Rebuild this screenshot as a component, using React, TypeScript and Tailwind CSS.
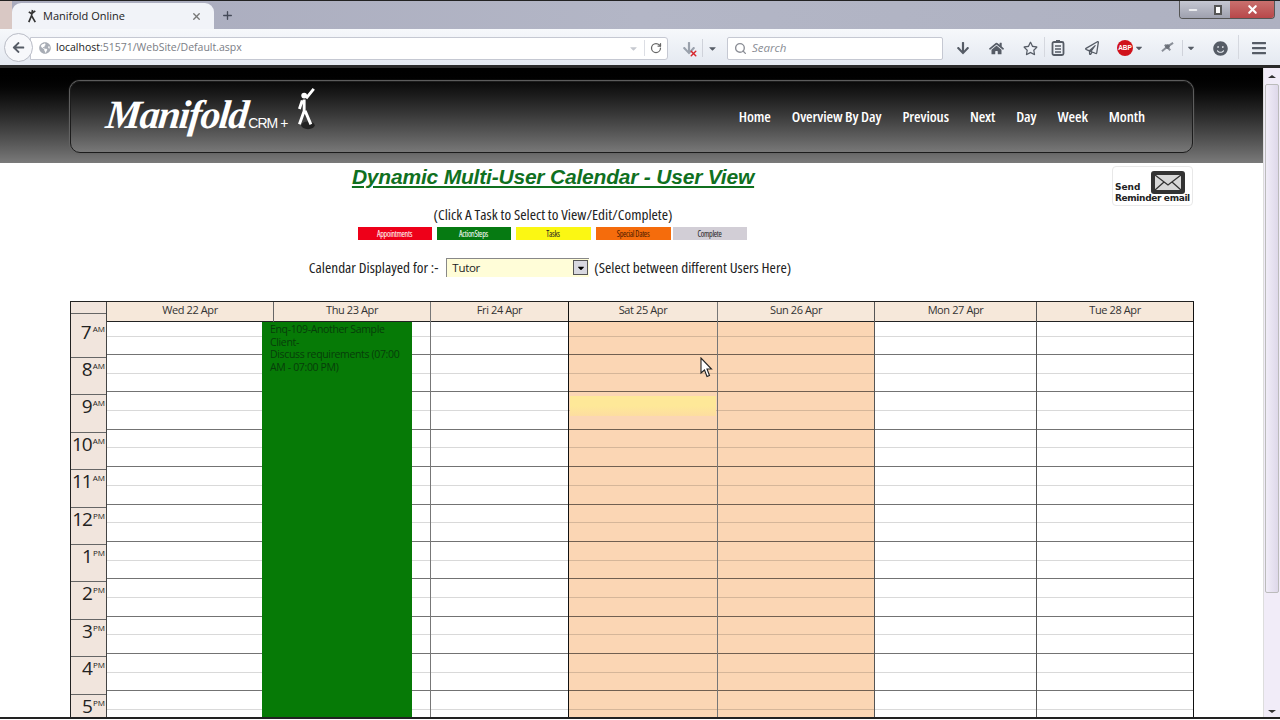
import React from "react";
import { FaArrowLeft, FaArrowDown, FaHome, FaRegStar, FaRegPaperPlane, FaSmile, FaBars, FaGlobeAmericas, FaCaretDown } from "react-icons/fa";
import { Search, RotateCw, Plus, X, Minus } from "lucide-react";

const condensed = "font-['Open_Sans',sans-serif] [font-stretch:75%]";

const navItems = ["Home", "Overview By Day", "Previous", "Next", "Day", "Week", "Month"];

const legend = [
  { label: "Appointments", cls: "w-[74px] mr-[5px] bg-[#ee0019] text-white" },
  { label: "ActionSteps", cls: "w-[74px] mr-[5px] bg-[#067a12] text-white" },
  { label: "Tasks", cls: "w-[75px] mr-[5px] bg-[#fbf713] text-[#222]" },
  { label: "Special Dates", cls: "w-[75px] mr-[2px] bg-[#f56c0c] text-[#4a1a00]" },
  { label: "Complete", cls: "w-[74px] bg-[#d2ced6] text-[#222]" },
];

const columns = [
  { label: "Wed 22 Apr", cls: "w-[167px] bg-white border-[#666]" },
  { label: "Thu 23 Apr", cls: "w-[157px] bg-white border-[#777]" },
  { label: "Fri 24 Apr", cls: "w-[138px] bg-white border-[#111]" },
  { label: "Sat 25 Apr", cls: "w-[149px] bg-[#fbd6b4] border-[#777]" },
  { label: "Sun 26 Apr", cls: "w-[157px] bg-[#fbd6b4] border-[#555]" },
  { label: "Mon 27 Apr", cls: "w-[162px] bg-white border-[#555]" },
  { label: "Tue 28 Apr", cls: "w-[157px] bg-white border-[#111]" },
];

const hours = [
  ["8", "AM"], ["9", "AM"], ["10", "AM"], ["11", "AM"], ["12", "PM"],
  ["1", "PM"], ["2", "PM"], ["3", "PM"], ["4", "PM"], ["5", "PM"],
];

const IconBtn = ({ className, children }: { className: string; children: React.ReactNode }) => (
  <div className={`flex items-center justify-center text-[#565c66] ${className}`}>{children}</div>
);

function Slots() {
  return (
    <>
      <div className="h-[15px] border-b border-black/15" />
      <div className="h-[18px] border-b border-black/55" />
      {Array.from({ length: 11 }).map((_, i) => (
        <React.Fragment key={i}>
          <div className="h-[18.7px] border-b border-black/15" />
          <div className="h-[18.7px] border-b border-black/55" />
        </React.Fragment>
      ))}
    </>
  );
}

function BrowserChrome() {
  return (
    <div className="shrink-0 font-['Open_Sans',sans-serif]">
      <div className="h-[29px] flex bg-gradient-to-r from-[#a9abbd] via-[#b3b6c6] to-[#aeb1c1] border-t border-[#222] relative">
        <div className="w-[12px] h-[28px] bg-[#d9c8c4]" />
        <div className="w-[202px] h-[26px] mt-[2px] bg-[#f1f3f8] rounded-t-[9px] flex items-center pl-[14px] pr-[12px] text-[#222] text-[11px]">
          <svg viewBox="0 0 14 16" className="w-[13px] h-[15px] mr-[4px]">
            <path d="M7 1 L6 7 L3 14 M6 7 L10 14 M3 3 L6 5 L10 2" stroke="#333" strokeWidth="1.8" fill="none" />
          </svg>
          <span>Manifold Online</span>
          <X size={11} strokeWidth={3} className="ml-auto text-[#777]" />
        </div>
        <Plus size={13} strokeWidth={2.5} className="ml-[7px] mt-[8px] text-[#454a58]" />
        <div className="absolute right-[5px] top-0 w-[96px] h-[18px] flex rounded-b-[4px] border border-t-0 border-[#555] overflow-hidden">
          <div className="w-[26px] flex items-center justify-center bg-gradient-to-b from-[#c5c7d2] to-[#9ea0ae]">
            <Minus size={12} strokeWidth={3} className="text-white" />
          </div>
          <div className="w-[24px] flex items-center justify-center bg-gradient-to-b from-[#c5c7d2] to-[#9ea0ae]">
            <div className="w-[8px] h-[10px] border-2 border-[#555] bg-white" />
          </div>
          <div className="flex-1 flex items-center justify-center bg-gradient-to-b from-[#c9706e] to-[#b8474a]">
            <X size={13} strokeWidth={4} className="text-white" />
          </div>
        </div>
      </div>
      <div className="h-[39px] pt-[2px] bg-gradient-to-b from-[#f6f8fb] to-[#e4e9f1] border-b-[3px] border-[#2a2a2a] flex items-center relative">
        <div className="absolute left-[4px] top-[4px] w-[29px] h-[29px] rounded-full bg-[#f7f8fb] border border-[#b9bcc6] flex items-center justify-center z-10">
          <FaArrowLeft size={13} className="text-[#565c66]" />
        </div>
        <div className="ml-[30px] w-[638px] h-[23px] bg-white border border-[#c5c8d2] rounded-r-[3px] flex items-center pl-[8px] text-[10.5px] text-[#7a7d85]">
          <FaGlobeAmericas size={12} className="text-[#a8adb5] mr-[5px]" />
          <span><span className="text-[#222]">localhost</span>:51571/WebSite/Default.aspx</span>
          <FaCaretDown size={11} className="ml-auto text-[#c6c9d0]" />
          <div className="w-px h-[16px] bg-[#dcdee4] ml-[5px]" />
          <RotateCw size={12} strokeWidth={2.5} className="mx-[5px] text-[#666]" />
        </div>
        <IconBtn className="w-[20px] ml-[11px] relative !text-[#9aa1ac]">
          <FaArrowDown size={14} />
          <X size={9} strokeWidth={4} className="absolute right-[1px] bottom-[-3px] text-[#d8262c]" />
        </IconBtn>
        <div className="w-px h-[18px] bg-[#cfd2da] ml-[3px]" />
        <FaCaretDown size={11} className="ml-[4px] text-[#565c66]" />
        <div className="ml-[9px] w-[216px] h-[23px] bg-white border border-[#c5c8d2] rounded-[2px] flex items-center pl-[6px] text-[11.5px] italic text-[#8a8d95]">
          <Search size={13} strokeWidth={2.5} className="text-[#8a8d95] mr-[5px]" />
          <span>Search</span>
        </div>
        <IconBtn className="absolute left-[955px] top-[11px] w-[16px] h-[16px]"><FaArrowDown size={14} /></IconBtn>
        <IconBtn className="absolute left-[988px] top-[11px] w-[16px] h-[16px]"><FaHome size={15} /></IconBtn>
        <IconBtn className="absolute left-[1022px] top-[11px] w-[16px] h-[16px]"><FaRegStar size={15} /></IconBtn>
        <div className="absolute left-[1044px] top-[8px] w-px h-[20px] bg-[#d5d8df]" />
        <IconBtn className="absolute left-[1051px] top-[10px] w-[14px] h-[17px]">
          <svg viewBox="0 0 14 17" className="w-[14px] h-[17px]">
            <rect x="1.5" y="3" width="11" height="13" rx="1.5" fill="none" stroke="currentColor" strokeWidth="1.8" />
            <rect x="5" y="1" width="4" height="3" fill="currentColor" />
            <path d="M4 7h6M4 10h6M4 13h6" stroke="currentColor" strokeWidth="1.3" />
          </svg>
        </IconBtn>
        <IconBtn className="absolute left-[1084px] top-[11px] w-[16px] h-[16px]"><FaRegPaperPlane size={14} /></IconBtn>
        <div className="absolute left-[1117px] top-[11px] w-[16px] h-[16px] rounded-full bg-[#d0121b] flex items-center justify-center text-white text-[6.5px] font-bold font-['Liberation_Sans',sans-serif]">ABP</div>
        <FaCaretDown size={10} className="absolute left-[1134px] top-[14px] text-[#565c66]" />
        <svg viewBox="0 0 16 14" className="absolute left-[1160px] top-[12px] w-[15px] h-[13px]">
          <path d="M2 11 L8 6 L14 2 M5 4 L8 7 L11 10" stroke="#8a8f98" strokeWidth="2.2" fill="none" />
          <circle cx="8" cy="6" r="2.5" fill="#6a6f78" />
        </svg>
        <div className="absolute left-[1182px] top-[11px] w-px h-[16px] bg-[#cfd2da]" />
        <FaCaretDown size={10} className="absolute left-[1186px] top-[14px] text-[#565c66]" />
        <IconBtn className="absolute left-[1212px] top-[11px] w-[16px] h-[16px]"><FaSmile size={15} /></IconBtn>
        <div className="absolute left-[1238px] top-[6px] w-px h-[24px] bg-[#d5d8df]" />
        <IconBtn className="absolute left-[1251px] top-[11px] w-[16px] h-[16px]"><FaBars size={16} /></IconBtn>
      </div>
    </div>
  );
}

function SiteHeader() {
  return (
    <div className="h-[95px] bg-gradient-to-b from-black to-[#7a7a7a] pt-[13px] pl-[70px]">
      <div className="w-[1123px] h-[72px] rounded-[10px] border border-[#1c1c1c] shadow-[0_0_1px_1px_#666] bg-gradient-to-b from-[#0a0a0a] to-[#787878] flex items-center pl-[35px] pr-[47px]">
        <span className="inline-block -skew-x-6 text-white text-[40px] leading-none font-bold italic font-['Liberation_Serif',serif] tracking-[-1.5px] mt-[-4px]">Manifold</span>
        <span className="text-white text-[14px] font-['Liberation_Sans',sans-serif] tracking-[-1px] mt-[12px] ml-[1px]">CRM +</span>
        <svg viewBox="0 0 24 48" className="w-[24px] h-[46px] ml-[9px] mb-[20px] self-end">
          <ellipse cx="12" cy="41" rx="7" ry="4" fill="#222" />
          <circle cx="8" cy="10" r="3" fill="#fff" />
          <path d="M10 13 L18 3 M8 14 L8 26 L3 40 M9 26 L15 40 M6 15 L3 24" stroke="#fff" strokeWidth="3" fill="none" />
        </svg>
        <nav className={`ml-auto flex gap-[21px] mt-[-2px] text-white text-[15px] font-semibold tracking-[-0.1px] ${condensed}`}>
          {navItems.map((item) => (
            <span key={item}>{item}</span>
          ))}
        </nav>
      </div>
    </div>
  );
}

function Intro() {
  return (
    <div className="h-[138px] pl-[70px] flex items-start">
      <div className="w-[966px] flex flex-col items-center">
        <h1 className="mt-[1px] text-[21px] leading-[26px] font-bold italic underline text-[#10701f] font-['Liberation_Sans',sans-serif] tracking-[-0.2px]">
          Dynamic Multi-User Calendar - User View
        </h1>
        <p className={`mt-[13px] text-[15.25px] leading-[22px] text-[#222] ${condensed}`}>(Click A Task to Select to View/Edit/Complete)</p>
        <div className={`mt-[2px] mr-[2px] flex text-[8px] leading-[13px] text-center tracking-[-0.3px] ${condensed}`}>
          {legend.map((l) => (
            <div key={l.label} className={l.cls}>{l.label}</div>
          ))}
        </div>
        <div className="mt-[16px] mr-[6px] flex items-center text-[15.25px] text-[#222]">
          <span className={condensed}>Calendar Displayed for :-</span>
          <div className="ml-[8px] w-[143px] h-[19px] bg-[#fffdd8] border-l border-t border-[#888] flex items-center pl-[5px] text-[11.5px] tracking-[-0.3px] font-['Open_Sans',sans-serif]">
            Tutor
            <div className="ml-auto w-[15px] h-[15px] mr-[1px] bg-[#d8d8e0] border border-[#555] flex items-center justify-center">
              <FaCaretDown size={10} className="text-black" />
            </div>
          </div>
          <span className={`ml-[5px] ${condensed}`}>(Select between different Users Here)</span>
        </div>
      </div>
      <div className="ml-[76px] mt-[3px] w-[81px] h-[40px] rounded-[4px] border border-[#e8e8e8] relative pl-[2px] pt-[15px] text-[9px] leading-[11px] font-bold text-[#222] font-['DejaVu_Sans',sans-serif]">
        <div>Send</div>
        <div className="whitespace-nowrap tracking-[-0.35px]">Reminder email</div>
        <svg viewBox="0 0 34 23" className="absolute left-[38px] top-[4px] w-[34px] h-[23px]">
          <rect x="0" y="0" width="34" height="23" rx="3" fill="#333" />
          <rect x="4" y="4" width="26" height="15" fill="#d8d8d8" />
          <path d="M4 4 L17 14 L30 4 M4 19 L13 11 M30 19 L21 11" stroke="#333" strokeWidth="1.3" fill="none" />
        </svg>
      </div>
    </div>
  );
}

function Calendar() {
  return (
    <div className="pl-[70px] font-['Open_Sans',sans-serif]">
      <div className="w-[1124px] flex border-l border-t border-[#222] relative">
        <div className="w-[36px] shrink-0 bg-[#f1e5dd] border-r border-[#444] text-[#222]">
          <div className="h-[12px] border-b border-[#666]" />
          <div className="h-[44px] border-b border-[#666] pt-[8px] flex justify-end items-start pr-[1px] leading-none">
            <span className="text-[19px] leading-[20px]">7</span>
            <span className="text-[8px] ml-[1px] mt-[2px] leading-[10px]">AM</span>
          </div>
          {hours.map(([h, m]) => (
            <div key={h} className="h-[37.4px] border-b border-[#666] pt-[1px] flex justify-end items-start pr-[1px]">
              <span className="text-[19px] leading-[20px] tracking-[-1px]">{h}</span>
              <span className="text-[8px] ml-[1px] mt-[2px] leading-[10px]">{m}</span>
            </div>
          ))}
        </div>
        {columns.map((c) => (
          <div key={c.label} className={`shrink-0 border-r ${c.cls}`}>
            <div className="h-[20px] bg-[#f6e8da] border-b border-[#222] text-center text-[11px] leading-[16px] text-[#333] tracking-[-0.4px]">
              {c.label}
            </div>
            <Slots />
          </div>
        ))}
        <div className="absolute left-[191px] top-[20px] w-[150px] h-[420px] bg-[#067a06] pl-[8px] pt-[1px] pr-[4px] text-[10.5px] leading-[12.7px] text-[#063d0a] tracking-[-0.35px]">
          Enq-109-Another Sample
          <br />
          Client-
          <br />
          Discuss requirements (07:00 AM - 07:00 PM)
        </div>
        <div className="absolute left-[499px] top-[94px] w-[146px] h-[20px] bg-gradient-to-b from-[#fee898] via-[#fee898] to-[#fddda0]" />
        <svg viewBox="0 0 13 22" className="absolute left-[629px] top-[55px] w-[13px] h-[22px]">
          <path d="M1 1 L1 16 L4.5 13 L7 19.5 L9.5 18.5 L7 12 L11.5 12 Z" fill="#fff" stroke="#222" strokeWidth="1.1" />
        </svg>
      </div>
    </div>
  );
}

function Scrollbar() {
  return (
    <div className="w-[17px] shrink-0 bg-[#f1ecf8] border-l border-[#ddd] flex flex-col items-center">
      <div className="h-[16px] flex items-center justify-center">
        <div className="w-0 h-0 border-x-[4px] border-x-transparent border-b-[3px] border-b-[#333]" />
      </div>
      <div className="w-[14px] h-[509px] rounded-[2px] border border-[#bbb] bg-gradient-to-r from-[#f1edf8] to-[#ded8ea]" />
      <div className="mt-auto mb-[4px] w-0 h-0 border-x-[4px] border-x-transparent border-t-[3px] border-t-[#333]" />
    </div>
  );
}

const App: React.FC = () => {
  return (
    <div className="w-[1280px] h-[720px] overflow-hidden bg-white flex flex-col">
      <BrowserChrome />
      <div className="h-[651px] flex border-b-2 border-[#222] shrink-0">
        <div className="flex-1 overflow-hidden">
          <SiteHeader />
          <Intro />
          <Calendar />
        </div>
        <Scrollbar />
      </div>
    </div>
  );
};

export default App;
